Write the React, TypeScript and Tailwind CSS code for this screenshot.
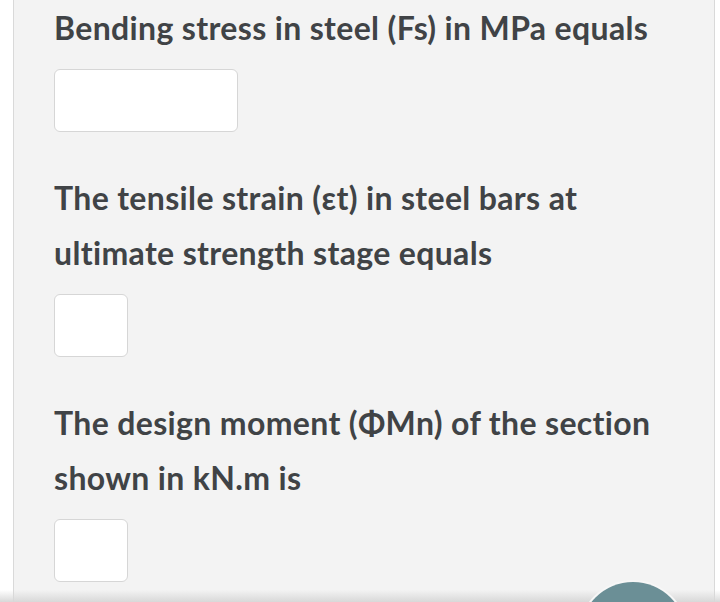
export default function App() {
  const questions = [
    { text: "Bending stress in steel (Fs) in MPa equals", box: "w-[184px]" },
    { text: "The tensile strain (εt) in steel bars at ultimate strength stage equals", box: "w-[74px]" },
    { text: "The design moment (ΦMn) of the section shown in kN.m is", box: "w-[74px]" },
  ];

  return (
    <div className="relative h-[602px] w-[720px] overflow-hidden bg-white">
      <div
        className="ml-[13px] h-full w-[702px] border-x border-[#d9d9d9] bg-[#f3f3f3] pl-[40px] pr-[50px] [font-variant-ligatures:none]"
        style={{ fontFamily: "Lato, 'Open Sans', sans-serif" }}
      >
        {questions.map((q, i) => (
          <div key={i} className={i === 0 ? "" : "mt-[38px]"}>
            <p className="text-[32px] font-bold leading-[55px] tracking-[0.35px] text-[#404346]">{q.text}</p>
            <div className={`mt-[14px] h-[63px] rounded-[6px] border border-[#d6d6d6] bg-white ${q.box}`} />
          </div>
        ))}
      </div>

      {/* bottom shadow bar */}
      <div className="absolute inset-x-0 bottom-0 h-[12px] bg-gradient-to-b from-transparent to-[#d8d8d8]" />

      {/* floating button */}
      <div className="absolute left-[580px] top-[582px] h-[106px] w-[106px] rounded-full bg-[#6b8f96] ring-2 ring-[#f7f7f7]" />
    </div>
  );
}
